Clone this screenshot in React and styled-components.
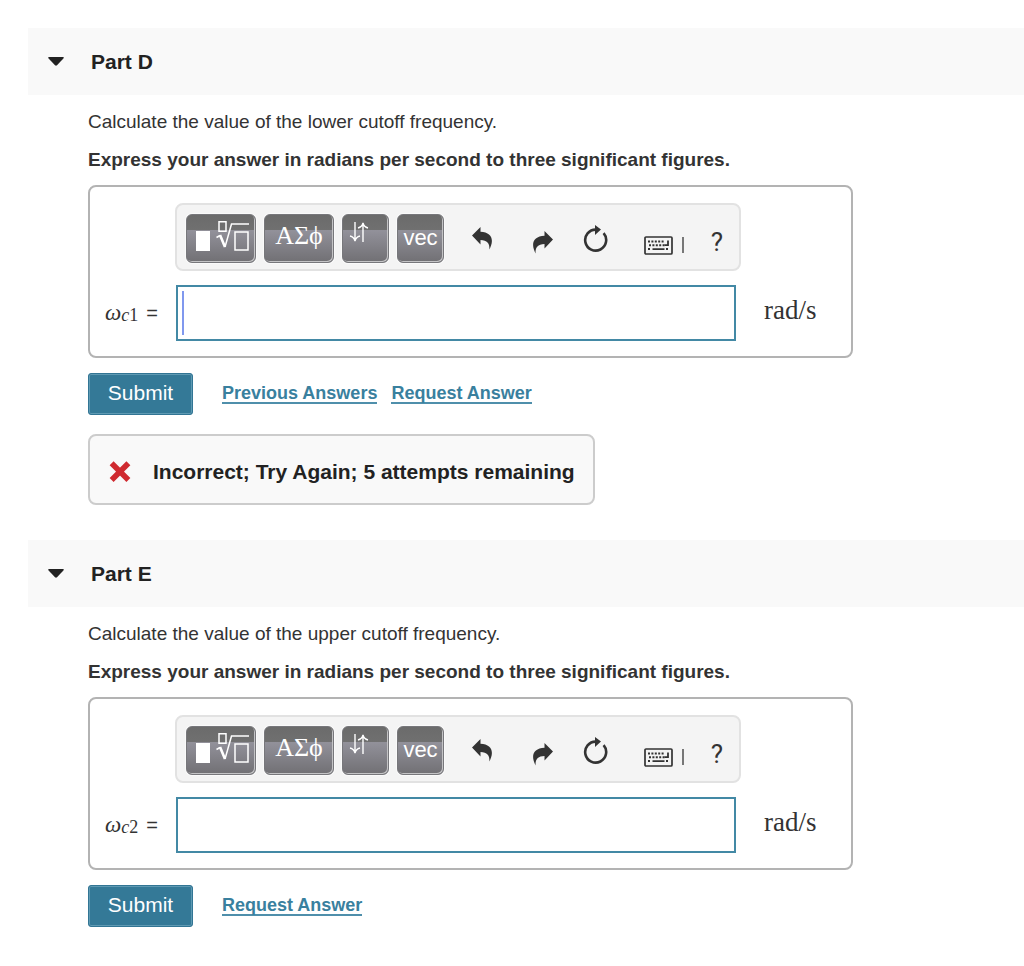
import { useState } from "react";
import styled, { createGlobalStyle, css } from "styled-components";

const GlobalStyle = createGlobalStyle`
  * {
    box-sizing: border-box;
  }
  body {
    margin: 0;
    background: #fff;
    color: #333;
    font-family: "Liberation Sans", Arial, Helvetica, sans-serif;
  }
`;

const Page = styled.main`
  display: flex;
  flex-direction: column;
  gap: 35px;
  padding: 28px 0 40px 28px;
`;

const PartHeader = styled.button`
  display: flex;
  align-items: center;
  gap: 27px;
  width: 100%;
  height: 67px;
  padding: 0 20px;
  border: none;
  background: #f9f9f9;
  color: #222;
  font-family: inherit;
  font-size: 21px;
  font-weight: bold;
  cursor: pointer;
`;

const PartBody = styled.div`
  padding: 15px 20px 0 60px;
`;

const Text = styled.p`
  margin: 0;
  font-size: 19px;
  line-height: 24px;
`;

const Instructions = styled(Text)`
  margin: 14px 0 13px;
  font-weight: bold;
`;

const AnswerBox = styled.div`
  display: grid;
  grid-template-columns: 70px minmax(0, 1fr) 106px;
  row-gap: 14px;
  align-items: center;
  max-width: 765px;
  padding: 16px 4px 15px 15px;
  border: 2px solid #b3b3b3;
  border-radius: 8px;
`;

const Toolbar = styled.div`
  grid-column: 2;
  display: flex;
  align-items: center;
  gap: 8px;
  height: 68px;
  padding: 2px 9px 0;
  border: 2px solid #e2e2e2;
  border-radius: 8px;
  background: #f4f4f4;
`;

const MathButton = styled.button`
  display: flex;
  align-items: center;
  justify-content: center;
  flex: none;
  width: ${(props) => (props.$wide ? 70 : 47)}px;
  height: 49px;
  padding: 0;
  border: 1px solid #77777b;
  border-radius: 6px;
  background: linear-gradient(#6b6b6b, #707070 32%, #92919a 33%, #717074);
  box-shadow: inset -1px -1px 0 #c4c4c6, 0 0 0 1px #fafafa;
  color: #fff;
  font-family: ${(props) =>
    props.$serif ? '"Liberation Serif", "Times New Roman", serif' : "inherit"};
  font-size: ${(props) => (props.$serif ? 26 : 22)}px;
  line-height: 1;
  cursor: pointer;
  ${(props) =>
    props.$corner &&
    css`
      align-items: flex-start;
      justify-content: flex-start;
      padding: 6px;
    `}
  ${(props) =>
    props.$raised &&
    css`
      padding-bottom: 4px;
    `}
`;

const Tools = styled.div`
  display: grid;
  grid-template-columns: 60px 60px 46px 92px 14px;
`;

const ToolButton = styled.button`
  display: flex;
  align-items: center;
  justify-content: center;
  height: 40px;
  padding: ${(props) => (props.$low ? "8px 0 0" : "0")};
  border: none;
  background: none;
  color: #333;
  font-family: Roboto, sans-serif;
  font-size: 26px;
  cursor: pointer;
  svg {
    display: block;
  }
`;

const Keyboard = styled(ToolButton)`
  gap: 9px;
  padding-top: 14px;
`;

const Label = styled.label`
  grid-column: 1;
  display: flex;
  align-items: baseline;
  font-family: "Liberation Serif", "Times New Roman", serif;
  font-size: 23px;
  line-height: 28px;
`;

const Subscript = styled.span`
  padding-top: 4px;
  font-size: 18px;
`;

const Symbol = styled.span`
  display: flex;
  align-items: center;
`;

const Equals = styled.span`
  margin-left: 8px;
  font-family: "Liberation Sans", Arial, sans-serif;
  font-size: 20px;
`;

const Field = styled.input`
  width: calc(100% - 6px);
  height: 56px;
  margin-left: 1px;
  padding: 0 12px;
  border: 2px solid #4389a5;
  border-radius: 0;
  outline: none;
  background: #fff;
  caret-color: #8098ee;
  font-family: inherit;
  font-size: 21px;
  ${(props) =>
    props.$active &&
    css`
      background: linear-gradient(#8098ee, #8098ee) 4px center / 2px 44px
        no-repeat #fff;
    `}
`;

const Unit = styled.span`
  padding: 0 0 6px 23px;
  font-family: "Liberation Serif", "Times New Roman", serif;
  font-size: 27px;
  line-height: 30px;
`;

const Actions = styled.div`
  display: flex;
  align-items: center;
  gap: 14px;
  margin-top: 15px;
`;

const Submit = styled.button`
  width: 105px;
  height: 42px;
  margin-right: 15px;
  padding: 0 0 2px;
  border: 1px solid #327594;
  border-radius: 3px;
  background: #347997;
  box-shadow: inset 0 0 0 1px #5f9ab3;
  color: #fff;
  font-family: inherit;
  font-size: 21px;
  cursor: pointer;
`;

const ActionLink = styled.a`
  border-bottom: 2px solid #4f8fab;
  color: #39809e;
  font-size: 18px;
  font-weight: bold;
  line-height: 18px;
  text-decoration: none;
`;

const Feedback = styled.div`
  display: flex;
  align-items: center;
  gap: 22px;
  width: fit-content;
  height: 71px;
  margin-top: 19px;
  padding: 4px 18px 0 19px;
  border: 2px solid #ccc;
  border-radius: 8px;
  background: #f9f9f9;
  color: #222;
  font-size: 21px;
  font-weight: bold;
`;

const Triangle = () => (
  <svg width="16" height="9" viewBox="0 0 16 9" aria-hidden="true">
    <path d="M1 0h14q1.4.4.4 1.6L9 8.2q-1 .9-2 0L.6 1.6Q-.4.4 1 0z" fill="#222" />
  </svg>
);

const RootIcon = () => (
  <svg width="56" height="34" viewBox="0 0 56 34" aria-hidden="true">
    <path d="M3 10h14v20H3z" fill="#fff" />
    <g fill="none" stroke="#fff" strokeWidth="1.5">
      <path d="M26 .8h7v9.4h-7z" />
      <path d="M42 11h13v18H42z" />
      <path d="M23.5 16.5l3.5-2M32 26L38.5 3H56" />
    </g>
    <path d="M27 14l5 12" stroke="#fff" strokeWidth="2.6" />
  </svg>
);

const ArrowsIcon = () => (
  <svg width="20" height="22" viewBox="0 0 20 22" aria-hidden="true">
    <path
      d="M6 1v19M1 15q4 1 5 5q1-4 5-5M14 21V2M9 7q4-1 5-5q1 4 5 5"
      fill="none"
      stroke="#fff"
      strokeWidth="1.4"
    />
  </svg>
);

const UndoIcon = ({ flip }) => (
  <svg width="21" height="23" viewBox="0 0 21 23" aria-hidden="true">
    <path
      transform={flip ? "translate(21 0) scale(-1 1)" : undefined}
      d="M0 8.5L8.5 0v4.8c7.5.2 11.4 4 11.4 9.2 0 3-1.2 5.8-2.5 8.5.4-6.3-2.3-9.4-8.9-9.5v4.5z"
      fill="currentColor"
    />
  </svg>
);

const ResetIcon = () => (
  <svg width="25" height="27" viewBox="0 0 25 27" aria-hidden="true">
    <path
      d="M20.6 8.2A10.5 10.5 0 1 1 13 4.6"
      fill="none"
      stroke="currentColor"
      strokeWidth="2.6"
    />
    <path d="M12 0l6 4.6L12 10z" fill="currentColor" />
  </svg>
);

const KeyboardIcon = () => (
  <svg width="29" height="19" viewBox="0 0 29 19" aria-hidden="true">
    <rect x="1" y="1" width="27" height="17" rx="1" fill="none" stroke="currentColor" strokeWidth="1.7" />
    <path
      d="M4 5.5h17M5 9.2h16M4 13h3M22 13h3"
      stroke="currentColor"
      strokeWidth="2"
      strokeDasharray="2 1.4"
    />
    <path d="M8.5 13.2h12M20.5 9.2H24V4.5" fill="none" stroke="currentColor" strokeWidth="1.8" />
  </svg>
);

const CrossIcon = () => (
  <svg width="22" height="22" viewBox="0 0 22 22" aria-hidden="true">
    <path
      d="M4.600 4.200l12.800 12.800M17.400 4.200L4.600 17"
      stroke="#cf2a30"
      strokeWidth="5.6"
      strokeLinecap="square"
      strokeLinejoin="round"
    />
  </svg>
);

const Divider = styled.span`
  width: 2px;
  height: 16px;
  background: #777;
`;

function MathToolbar() {
  return (
    <Toolbar role="toolbar">
      <MathButton type="button" $wide aria-label="Templates">
        <RootIcon />
      </MathButton>
      <MathButton type="button" $wide $serif $raised>
        ΑΣϕ
      </MathButton>
      <MathButton type="button" $corner aria-label="Subscripts">
        <ArrowsIcon />
      </MathButton>
      <MathButton type="button">vec</MathButton>
      <Tools>
        <ToolButton type="button" aria-label="Undo">
          <UndoIcon />
        </ToolButton>
        <ToolButton type="button" $low aria-label="Redo">
          <UndoIcon flip />
        </ToolButton>
        <ToolButton type="button" aria-label="Reset">
          <ResetIcon />
        </ToolButton>
        <Keyboard type="button" aria-label="Keyboard shortcuts">
          <KeyboardIcon />
          <Divider />
        </Keyboard>
        <ToolButton type="button" $low>
          ?
        </ToolButton>
      </Tools>
    </Toolbar>
  );
}

function Part({ name, index, cutoff, active, links, feedback }) {
  const [open, setOpen] = useState(true);
  const [answer, setAnswer] = useState("");
  const id = `answer-${index}`;

  return (
    <section>
      <PartHeader type="button" aria-expanded={open} onClick={() => setOpen(!open)}>
        <Triangle />
        {name}
      </PartHeader>
      {open && (
        <PartBody>
          <Text>Calculate the value of the {cutoff} cutoff frequency.</Text>
          <Instructions>
            Express your answer in radians per second to three significant figures.
          </Instructions>
          <AnswerBox>
            <MathToolbar />
            <Label htmlFor={id}>
              <Symbol>
                <i>ω</i>
                <Subscript>
                  <i>c</i>
                  {index}
                </Subscript>
              </Symbol>
              <Equals>=</Equals>
            </Label>
            <Field
              id={id}
              type="text"
              value={answer}
              $active={active && !answer}
              onChange={(e) => setAnswer(e.target.value)}
            />
            <Unit>rad/s</Unit>
          </AnswerBox>
          <Actions>
            <Submit type="button">Submit</Submit>
            {links.map((link) => (
              <ActionLink href="#" key={link}>
                {link}
              </ActionLink>
            ))}
          </Actions>
          {feedback && (
            <Feedback role="status">
              <CrossIcon />
              {feedback}
            </Feedback>
          )}
        </PartBody>
      )}
    </section>
  );
}

export default function App() {
  return (
    <>
      <GlobalStyle />
      <Page>
        <Part
          name="Part D"
          index={1}
          cutoff="lower"
          active
          links={["Previous Answers", "Request Answer"]}
          feedback="Incorrect; Try Again; 5 attempts remaining"
        />
        <Part name="Part E" index={2} cutoff="upper" links={["Request Answer"]} />
      </Page>
    </>
  );
}
